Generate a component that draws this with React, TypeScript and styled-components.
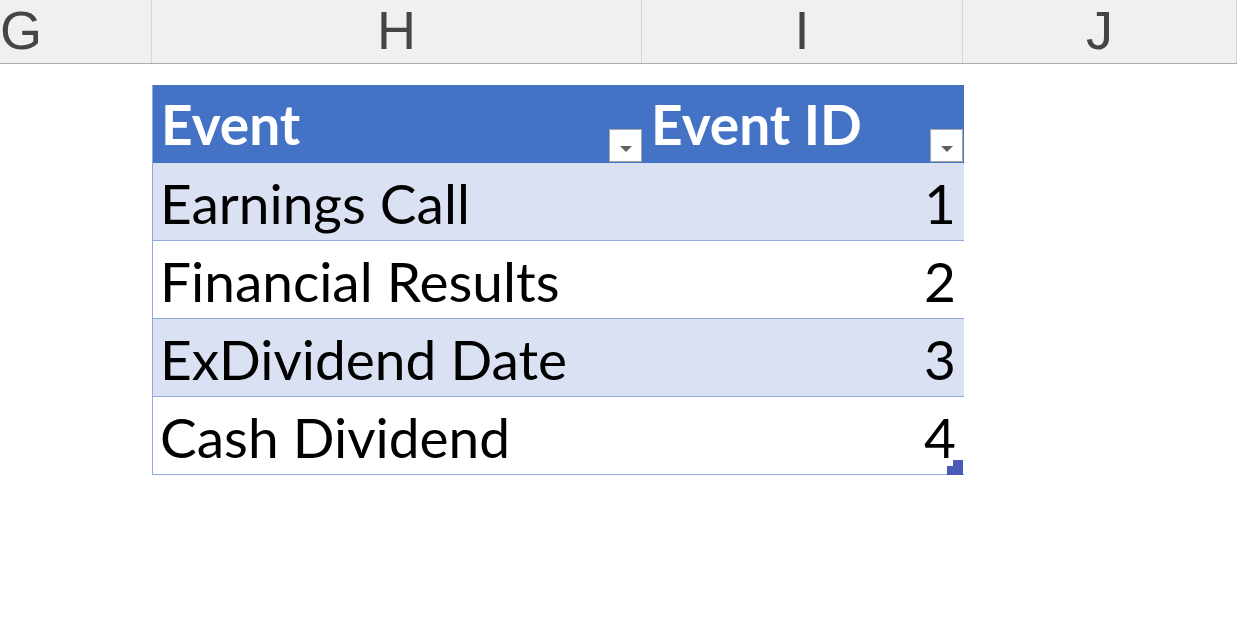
import styled, { createGlobalStyle } from "styled-components";

const GlobalStyle = createGlobalStyle`
  html, body {
    margin: 0;
    padding: 0;
    background: #ffffff;
  }
  body {
    font-family: Lato, "Liberation Sans", sans-serif;
  }
`

const Sheet = styled.div`
  width: 1237px;
  height: 623px;
  overflow: hidden;
  background: #ffffff;
`

const ColumnBar = styled.div`
  display: grid;
  grid-template-columns: 152px 490px 321px 274px;
  height: 63px;
  background: #f0f0f0;
  border-bottom: 1px solid #ababab;
`

const ColumnHead = styled.div<{ $align?: string }>`
  height: 63px;
  display: flex;
  align-items: flex-start;
  justify-content: ${props => props.$align || "center"};
  border-right: 1px solid #d6d6d6;
  color: #454545;
  font-family: "Liberation Sans", Arial, sans-serif;
  font-size: 54px;
  line-height: 1;
  padding-top: 3px;
  box-sizing: border-box;
`

const Body = styled.div`
  padding: 21px 0 0 152px;
`

const Table = styled.div`
  display: grid;
  grid-template-columns: 490px 321px;
  width: 811px;
  box-sizing: border-box;
  border-left: 1px solid #8ea9db;
  border-right: 1px solid #8ea9db;
  position: relative;
`

const HeadCell = styled.div`
  position: relative;
  height: 78px;
  background: #4472c4;
  color: #ffffff;
  font-weight: 700;
  font-size: 55px;
  line-height: 1;
  display: flex;
  align-items: flex-end;
  padding: 0 0 11px 8px;
  box-sizing: border-box;
`

const Cell = styled.div<{ $band: boolean; $num?: boolean }>`
  height: 78px;
  background: ${props => (props.$band ? "#d9e1f2" : "#ffffff")};
  border-bottom: 1px solid #8ea9db;
  color: #000000;
  font-size: 55px;
  line-height: 1;
  display: flex;
  align-items: flex-end;
  justify-content: ${props => (props.$num ? "flex-end" : "flex-start")};
  padding: 0 ${props => (props.$num ? "8px" : "0")} 9px ${props => (props.$num ? "0" : "7px")};
  box-sizing: border-box;
`

const FilterButton = styled.div`
  position: absolute;
  right: 1px;
  bottom: 1px;
  width: 33px;
  height: 33px;
  background: #ffffff;
  border: 1px solid #a6a6a6;
  box-sizing: border-box;
  display: flex;
  align-items: center;
  justify-content: center;
  padding-top: 6px;
`

const Arrow = styled.div`
  width: 0;
  height: 0;
  border-left: 6px solid transparent;
  border-right: 6px solid transparent;
  border-top: 6px solid #606060;
`

const ResizeHandle = styled.svg`
  position: absolute;
  right: -1px;
  bottom: 0;
`

const rows = [
  { event: "Earnings Call", id: 1 },
  { event: "Financial Results", id: 2 },
  { event: "ExDividend Date", id: 3 },
  { event: "Cash Dividend", id: 4 },
]

function App() {
  return (
    <Sheet>
      <GlobalStyle />
      <ColumnBar>
        <ColumnHead $align="flex-start">G</ColumnHead>
        <ColumnHead>H</ColumnHead>
        <ColumnHead>I</ColumnHead>
        <ColumnHead>J</ColumnHead>
      </ColumnBar>
      <Body>
        <Table>
          <HeadCell>
            Event
            <FilterButton><Arrow /></FilterButton>
          </HeadCell>
          <HeadCell>
            Event ID
            <FilterButton><Arrow /></FilterButton>
          </HeadCell>
          {rows.map((row, idx) => [
            <Cell key={row.event} $band={idx % 2 === 0}>{row.event}</Cell>,
            <Cell key={`id-${row.id}`} $band={idx % 2 === 0} $num>{row.id}</Cell>,
          ])}
          <ResizeHandle width="16" height="15" viewBox="0 0 16 15">
            <path d="M6 0 H16 V15 H0 V6 H6 Z" fill="#4a5ab8" />
          </ResizeHandle>
        </Table>
      </Body>
    </Sheet>
  )
}

export default App
